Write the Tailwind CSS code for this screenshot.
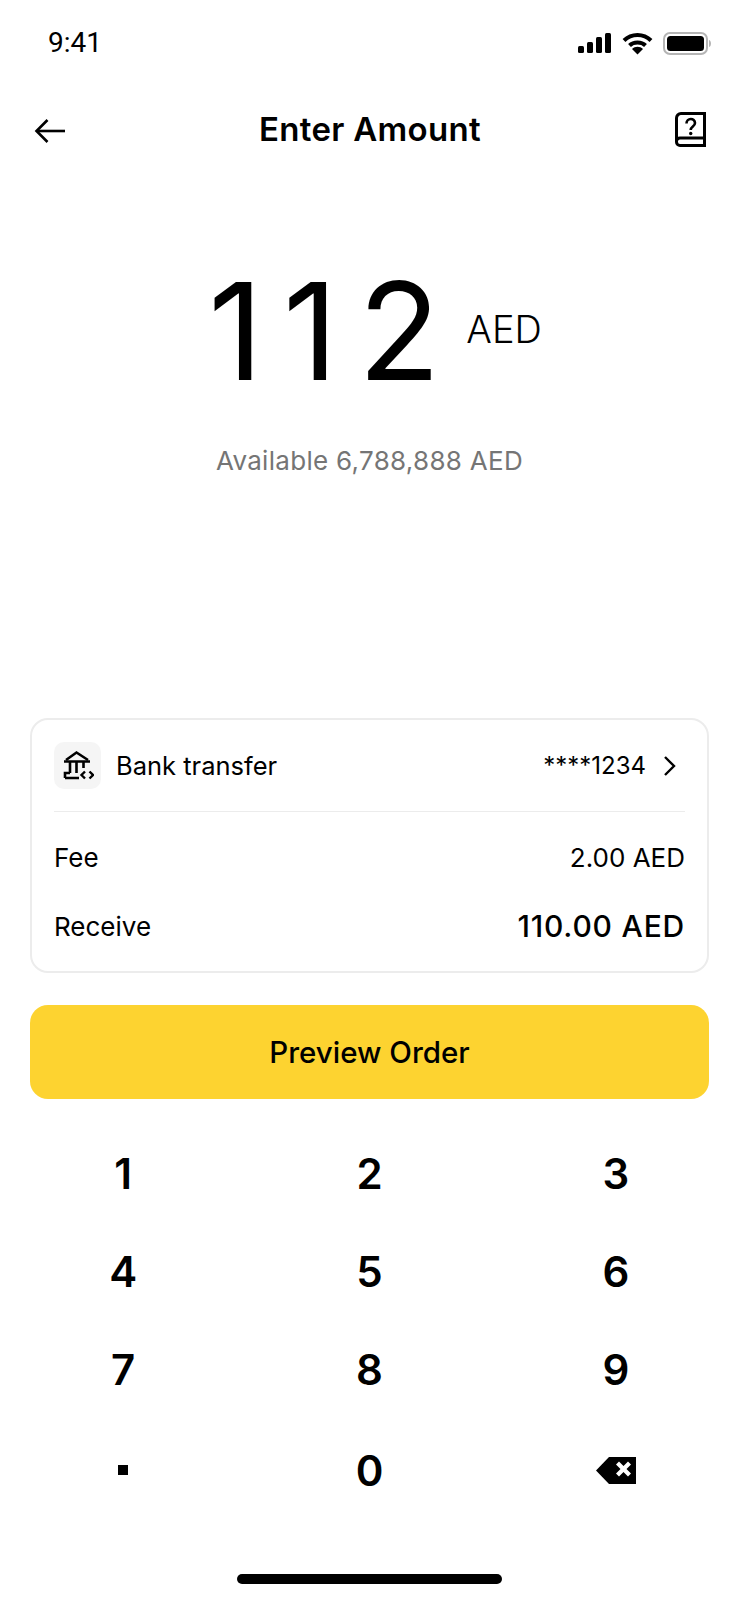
<!DOCTYPE html>
<html lang="en">
<head>
<meta charset="UTF-8">
<meta name="viewport" content="width=device-width, initial-scale=1.0">
<title>Enter Amount</title>
<script src="https://cdn.jsdelivr.net/npm/@tailwindcss/browser@4"></script>
</head>
<body class="bg-white text-black font-['Inter',sans-serif]">
<div class="w-[739px] h-[1600px] flex flex-col overflow-hidden">
  <!-- status bar -->
  <div class="h-[86px] flex items-center justify-between pl-[48px] pr-[28px]">
    <span class="text-[28px] leading-none font-['Roboto',sans-serif]">9:41</span>
    <div class="flex items-center gap-[10px]">
      <svg width="34" height="22" viewBox="0 0 34 22"><rect x="0" y="14" width="6" height="7" rx="1.5"/><rect x="9" y="10" width="6" height="11" rx="1.5"/><rect x="18" y="5" width="6" height="16" rx="1.5"/><rect x="27" y="1" width="6" height="20" rx="1.5"/></svg>
      <svg width="31" height="23" viewBox="0 0 31 23" fill="none" stroke="#000" stroke-width="4"><path d="M2 8.5C9.5 1 21.5 1 29 8.5"/><path d="M7.5 13.5C11.5 9.5 19.5 9.5 23.5 13.5"/><path d="M10 17l5.500 5.500L21 17c-3-3-8-3-11 0z" fill="#000" stroke="none"/></svg>
      <svg width="48" height="23" viewBox="0 0 48 23"><rect x="1" y="1" width="43" height="21" rx="6" fill="none" stroke="#b5b5b5" stroke-width="2"/><rect x="4" y="4" width="37" height="15" rx="3.500"/><path d="M46 8c1.500.5 2 2 2 3.500s-.5 3-2 3.500z" fill="#b5b5b5"/></svg>
    </div>
  </div>
  <!-- header -->
  <div class="h-[86px] flex items-center justify-between pl-[34px] pr-[33px]">
    <svg class="mt-[3px]" width="31" height="26" viewBox="0 0 31 26" fill="none" stroke="#000" stroke-width="2.600"><path d="M31 13H3"/><path d="M13.500 2L2.500 13l11 11"/></svg>
    <h1 class="text-[33px] leading-none font-semibold tracking-[0.3px]">Enter Amount</h1>
    <svg width="31" height="35" viewBox="0 0 31 35" fill="none" stroke="#000" stroke-width="3"><path d="M29.500 1.500H6A4.500 4.500 0 0 0 1.500 6v24A3.500 3.500 0 0 0 5 33.500h24.500zM1.500 29A3.500 3.500 0 0 1 5 26h24.500"/><path d="M11.500 11.500c0-6 8.500-6 8.500-.5 0 3.500-4.300 3.500-4.300 7" stroke-width="2.600"/><circle cx="15.700" cy="21.500" r="1.700" fill="#000" stroke="none"/></svg>
  </div>
  <!-- amount -->
  <div class="mt-[94px] flex justify-center items-start h-[130px] pl-[11px]">
    <span class="text-[135px] leading-[130px] tracking-[20px]">112</span>
    <span class="ml-[6px] mt-[41px] text-[38px] leading-[44px] font-light">AED</span>
  </div>
  <p class="mt-[47px] text-center text-[26px] leading-[36px] tracking-[0.3px] text-[#757575]">Available 6,788,888 AED</p>
  <!-- order card -->
  <div class="mt-[239px] mx-[30px] h-[255px] border-2 border-[#ececec] rounded-[18px] px-[22px]">
    <div class="h-[92px] flex items-center border-b border-[#ececec]">
      <div class="w-[47px] h-[47px] rounded-[10px] bg-[#f5f5f5] flex items-center justify-center">
        <svg width="32" height="32" viewBox="0 0 32 32" fill="none" stroke="#000" stroke-width="2.600"><path d="M4 10L14.500 2.500 26 10"/><path d="M2 11.500h26M8 12v11M14.500 12v11M21.500 12v6M3 28h14M3 28v-5h5"/><path d="M23 21.500l-3.500 3.500 3.500 3.500M27.500 21.500l3.500 3.500-3.500 3.500" stroke-width="2.400"/></svg>
      </div>
      <span class="ml-[15px] text-[25.500px] leading-none">Bank transfer</span>
      <span class="ml-auto text-[24px] leading-none">****1234</span>
      <svg class="ml-[17px] mr-[8px]" width="14" height="22" viewBox="0 0 14 22" fill="none" stroke="#000" stroke-width="2.400"><path d="M2 2l9 9-9 9"/></svg>
    </div>
    <div class="mt-[12px] h-[68px] flex items-center justify-between">
      <span class="text-[26px] leading-none">Fee</span>
      <span class="text-[26px] leading-none">2.00 AED</span>
    </div>
    <div class="h-[68px] flex items-center justify-between">
      <span class="text-[26px] leading-none pt-[2px]">Receive</span>
      <span class="text-[30px] leading-none font-medium tracking-[0.8px]">110.00 AED</span>
    </div>
  </div>
  <button class="mt-[32px] mx-[30px] h-[94px] rounded-[18px] bg-[#fdd330] text-[29.500px] font-medium">Preview Order</button>
  <!-- keypad -->
  <div class="mt-[25px] grid grid-cols-3 auto-rows-[98px] text-[42px] font-semibold">
    <div class="flex items-center justify-center">1</div>
    <div class="flex items-center justify-center">2</div>
    <div class="flex items-center justify-center">3</div>
    <div class="flex items-center justify-center">4</div>
    <div class="flex items-center justify-center">5</div>
    <div class="flex items-center justify-center">6</div>
    <div class="flex items-center justify-center">7</div>
    <div class="flex items-center justify-center">8</div>
    <div class="flex items-center justify-center">9</div>
    <div class="flex items-center justify-center pt-[6px]"><span class="w-[10px] h-[10px] bg-black"></span></div>
    <div class="flex items-center justify-center pt-[6px]">0</div>
    <div class="flex items-center justify-center pt-[6px]">
      <svg width="40" height="27" viewBox="0 0 40 27"><path fill-rule="evenodd" d="M13 0H40V27H13L0 13.500zM20 7.500l3-3 4.500 4.500 4.500-4.500 3 3-4.500 4.500 4.500 4.500-3 3-4.500-4.500-4.500 4.500-3-3 4.500-4.500z"/></svg>
    </div>
  </div>
  <div class="mt-auto mb-[16px] mx-auto w-[265px] h-[10px] rounded-full bg-black"></div>
</div>
</body>
</html>
